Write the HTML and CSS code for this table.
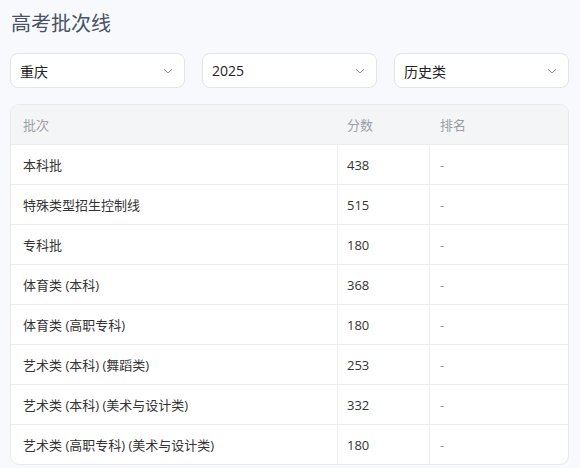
FILE: index.html
```html
<!DOCTYPE html>
<html lang="zh">
<head>
<meta charset="utf-8">
<link rel="stylesheet" href="styles.css">
</head>
<body>
<div class="page">
  <h1 class="title">高考批次线</h1>
  <div class="filters">
    <div class="select"><span>重庆</span><svg class="chev" viewBox="0 0 10 6"><path d="M1 1 L5 5 L9 1"/></svg></div>
    <div class="select"><span>2025</span><svg class="chev" viewBox="0 0 10 6"><path d="M1 1 L5 5 L9 1"/></svg></div>
    <div class="select"><span>历史类</span><svg class="chev" viewBox="0 0 10 6"><path d="M1 1 L5 5 L9 1"/></svg></div>
  </div>
  <div class="table">
    <div class="row head"><div class="c1">批次</div><div class="c2">分数</div><div class="c3">排名</div></div>
    <div class="row"><div class="c1">本科批</div><div class="c2">438</div><div class="c3">-</div></div>
    <div class="row"><div class="c1">特殊类型招生控制线</div><div class="c2">515</div><div class="c3">-</div></div>
    <div class="row"><div class="c1">专科批</div><div class="c2">180</div><div class="c3">-</div></div>
    <div class="row"><div class="c1">体育类 (本科)</div><div class="c2">368</div><div class="c3">-</div></div>
    <div class="row"><div class="c1">体育类 (高职专科)</div><div class="c2">180</div><div class="c3">-</div></div>
    <div class="row"><div class="c1">艺术类 (本科) (舞蹈类)</div><div class="c2">253</div><div class="c3">-</div></div>
    <div class="row"><div class="c1">艺术类 (本科) (美术与设计类)</div><div class="c2">332</div><div class="c3">-</div></div>
    <div class="row last"><div class="c1">艺术类 (高职专科) (美术与设计类)</div><div class="c2">180</div><div class="c3">-</div></div>
  </div>
</div>
</body>
</html>
```
FILE: styles.css
```css
* { box-sizing: border-box; }
html, body { margin: 0; padding: 0; }
body {
  background: #f8f9fc;
  font-family: "Open Sans", "Noto Sans CJK SC", sans-serif;
  color: #333;
}
.page {
  padding: 10px 11px 0 10px;
}
.title {
  margin: 0;
  padding-left: 1px;
  font-size: 20px;
  line-height: 28px;
  font-weight: 400;
  color: #465366;
}
.filters {
  display: grid;
  grid-template-columns: 1fr 1fr 1fr;
  column-gap: 17px;
  margin-top: 15px;
}
.select {
  height: 35px;
  background: #fff;
  border: 1px solid #e2e4e8;
  border-radius: 8px;
  display: flex;
  align-items: center;
  justify-content: space-between;
  padding: 0 11px 0 9px;
  font-size: 14px;
  color: #222;
}
.chev {
  width: 10px;
  height: 6px;
  fill: none;
  stroke: #8f9297;
  stroke-width: 1;
}
.table {
  margin-top: 16px;
  background: #fff;
  border: 1px solid #e9eaed;
  border-radius: 9px;
  overflow: hidden;
  font-size: 13px;
}
.row {
  display: grid;
  grid-template-columns: 326px 92px 1fr;
  height: 40px;
  border-bottom: 1px solid #ededf0;
}
.row.last { border-bottom: none; height: 39px; }
.row > div {
  display: flex;
  align-items: center;
}
.c1 { padding-left: 12px; }
.c2 { padding-left: 9px; border-left: 1px solid #ededf0; }
.c3 { padding-left: 10px; border-left: 1px solid #ededf0; color: #999; }
.row.head {
  background: #f4f5f7;
  color: #9a9ea6;
  height: 40px;
}
.row.head > div { border-left-color: transparent; }
.row.head .c3 { color: #9a9ea6; }
```
